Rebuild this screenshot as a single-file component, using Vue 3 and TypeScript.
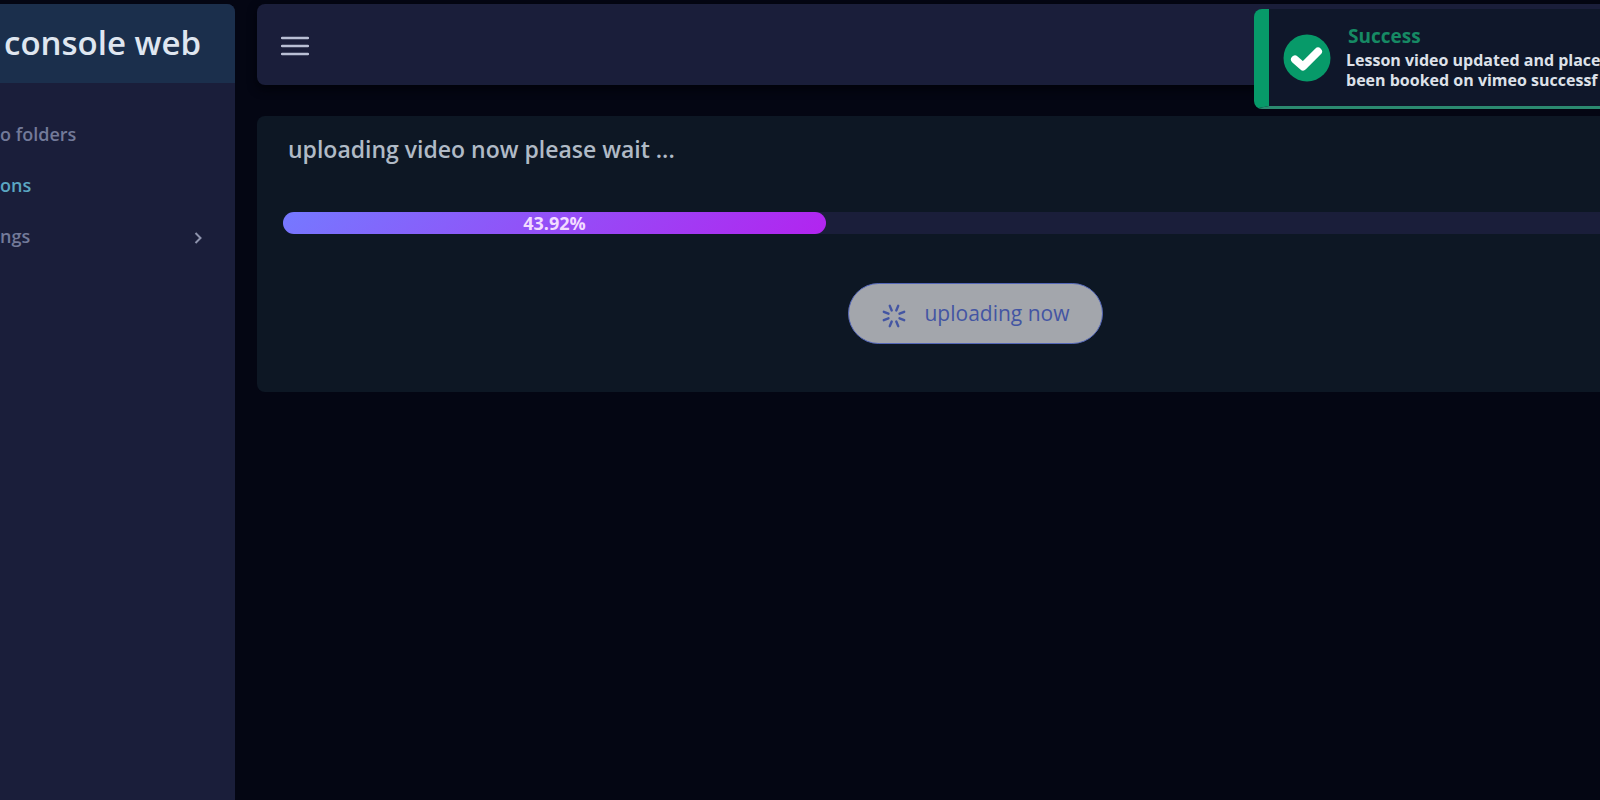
<script setup lang="ts">
import { computed, ref } from 'vue'

interface NavItem {
  label: string
  active?: boolean
  expandable?: boolean
}

const navItems: NavItem[] = [
  { label: 'o folders' },
  { label: 'ons', active: true },
  { label: 'ngs', expandable: true },
]

const progressLabel = ref('43.92%')
const renderedProgress = ref(39.2)
const barStyle = computed(() => ({ width: `${renderedProgress.value}%` }))
const spokes = [22.5, 67.5, 112.5, 157.5, 202.5, 247.5, 292.5, 337.5]
</script>

<template>
  <div class="app">
    <aside class="sidebar">
      <h1 class="brand">console web</h1>
      <nav class="nav">
        <a
          v-for="item in navItems"
          :key="item.label"
          href="#"
          class="nav-link"
          :class="{ active: item.active }"
        >
          <span>{{ item.label }}</span>
          <svg v-if="item.expandable" class="chevron" viewBox="0 0 8 12" aria-hidden="true">
            <path d="M1.5 1 L6.5 6 L1.5 11" />
          </svg>
        </a>
      </nav>
    </aside>

    <main class="content">
      <header class="topbar">
        <button type="button" class="menu" aria-label="Menu">
          <svg viewBox="0 0 28 20" aria-hidden="true">
            <path d="M1 2H27M1 10H27M1 18H27" />
          </svg>
        </button>
      </header>

      <section class="card">
        <h2 class="title">uploading video now please wait ...</h2>
        <div class="track" role="progressbar" aria-label="Upload progress" :aria-valuetext="progressLabel">
          <div class="bar" :style="barStyle">{{ progressLabel }}</div>
        </div>
        <button type="button" class="upload" disabled>
          <svg class="spinner" viewBox="-12 -12 24 24" aria-hidden="true">
            <path v-for="angle in spokes" :key="angle" d="M0 -6V-11" :transform="`rotate(${angle})`" />
          </svg>
          <span>uploading now</span>
        </button>
      </section>
    </main>

    <div class="toast" role="status">
      <svg class="check" viewBox="0 0 48 48" aria-hidden="true">
        <circle cx="24" cy="24" r="23.5" />
        <path d="M12 25.5 L20 32.5 L35 17.5" />
      </svg>
      <div class="toast-text">
        <strong class="toast-title">Success</strong>
        <p class="toast-body">Lesson video updated and place<br />been booked on vimeo successf</p>
      </div>
    </div>
  </div>
</template>

<style>
body {
  margin: 0;
  background: #040613;
}
</style>

<style scoped>
.app {
  position: relative;
  display: flex;
  gap: 22px;
  min-height: 100vh;
  box-sizing: border-box;
  padding-top: 4px;
  overflow: hidden;
  background: #040613;
  font-family: "Open Sans", "Noto Sans", sans-serif;
}

.sidebar {
  flex: 0 0 235px;
  overflow: hidden;
  border-top-right-radius: 8px;
  background: #1a1e3a;
}

.brand {
  margin: 0;
  padding: 0 34px 2px 0;
  background: #1b2f4c;
  color: #dfe6f0;
  font-size: 33px;
  font-weight: 600;
  line-height: 77px;
  text-align: right;
  white-space: nowrap;
}

.nav {
  display: flex;
  flex-direction: column;
  padding-top: 25px;
}

.nav-link {
  display: flex;
  align-items: center;
  justify-content: space-between;
  height: 51px;
  padding-right: 33px;
  color: #737a99;
  font-size: 18px;
  font-weight: 600;
  text-decoration: none;
}

.nav-link.active {
  color: #5ba6c2;
}

.chevron {
  width: 8px;
  height: 12px;
  margin-top: 4px;
  fill: none;
  stroke: #8d93ac;
  stroke-width: 2;
}

.content {
  flex: 1;
  min-width: 0;
  margin-right: -94px;
}

.topbar {
  display: flex;
  align-items: center;
  height: 81px;
  padding-left: 24px;
  border-radius: 8px;
  background: #1a1e3a;
  box-shadow: 0 4px 10px #02030a;
}

.menu {
  display: flex;
  padding: 2px 0 0;
  border: 0;
  background: none;
}

.menu svg {
  width: 28px;
  height: 20px;
  fill: none;
  stroke: #b9bfd4;
  stroke-width: 2.4;
  stroke-linecap: round;
}

.card {
  display: flex;
  flex-direction: column;
  margin-top: 31px;
  padding: 17px 26px 48px;
  border-radius: 8px;
  background: #0d1724;
}

.title {
  margin: 0;
  padding-left: 5px;
  color: #b0bac6;
  font-size: 23px;
  font-weight: 600;
  line-height: 32px;
}

.track {
  height: 22px;
  margin-top: 47px;
  border-radius: 11px;
  background: #1a1e3a;
}

.bar {
  height: 22px;
  border-radius: 11px;
  background: linear-gradient(135deg, #7579ff, #b224ef);
  color: #f2dcff;
  font-size: 18px;
  font-weight: 700;
  line-height: 22px;
  text-align: center;
}

.upload {
  display: flex;
  align-items: center;
  align-self: center;
  gap: 18px;
  height: 61px;
  margin-top: 49px;
  padding: 0 32px 0 33px;
  border: 1px solid #5467b8;
  border-radius: 31px;
  background: #a3a6ac;
  color: #4355a3;
  font-family: inherit;
  font-size: 21px;
}

.upload span {
  padding-bottom: 2px;
}

.spinner {
  width: 24px;
  height: 24px;
  margin-top: 5px;
  fill: none;
  stroke: #4355a3;
  stroke-width: 2.4;
  stroke-linecap: round;
}

.toast {
  position: absolute;
  top: 9px;
  right: 0;
  display: flex;
  align-items: center;
  gap: 15px;
  box-sizing: border-box;
  width: 346px;
  height: 100px;
  padding-left: 14px;
  overflow: hidden;
  border-radius: 8px 0 0 8px;
  border-left: 15px solid #079a69;
  border-bottom: 3px solid #2b8a70;
  background: #0f172a;
}

.check {
  flex: 0 0 48px;
  height: 48px;
  fill: #079a69;
}

.check path {
  fill: none;
  stroke: #fff;
  stroke-width: 8;
  stroke-linecap: round;
  stroke-linejoin: round;
}

.toast-text {
  padding-bottom: 4px;
  white-space: nowrap;
}

.toast-title {
  display: block;
  padding-left: 2px;
  color: #168a64;
  font-size: 19px;
  font-weight: 700;
  line-height: 28px;
}

.toast-body {
  margin: 0;
  color: #dde1e9;
  font-size: 16px;
  font-weight: 700;
  line-height: 20px;
}
</style>
